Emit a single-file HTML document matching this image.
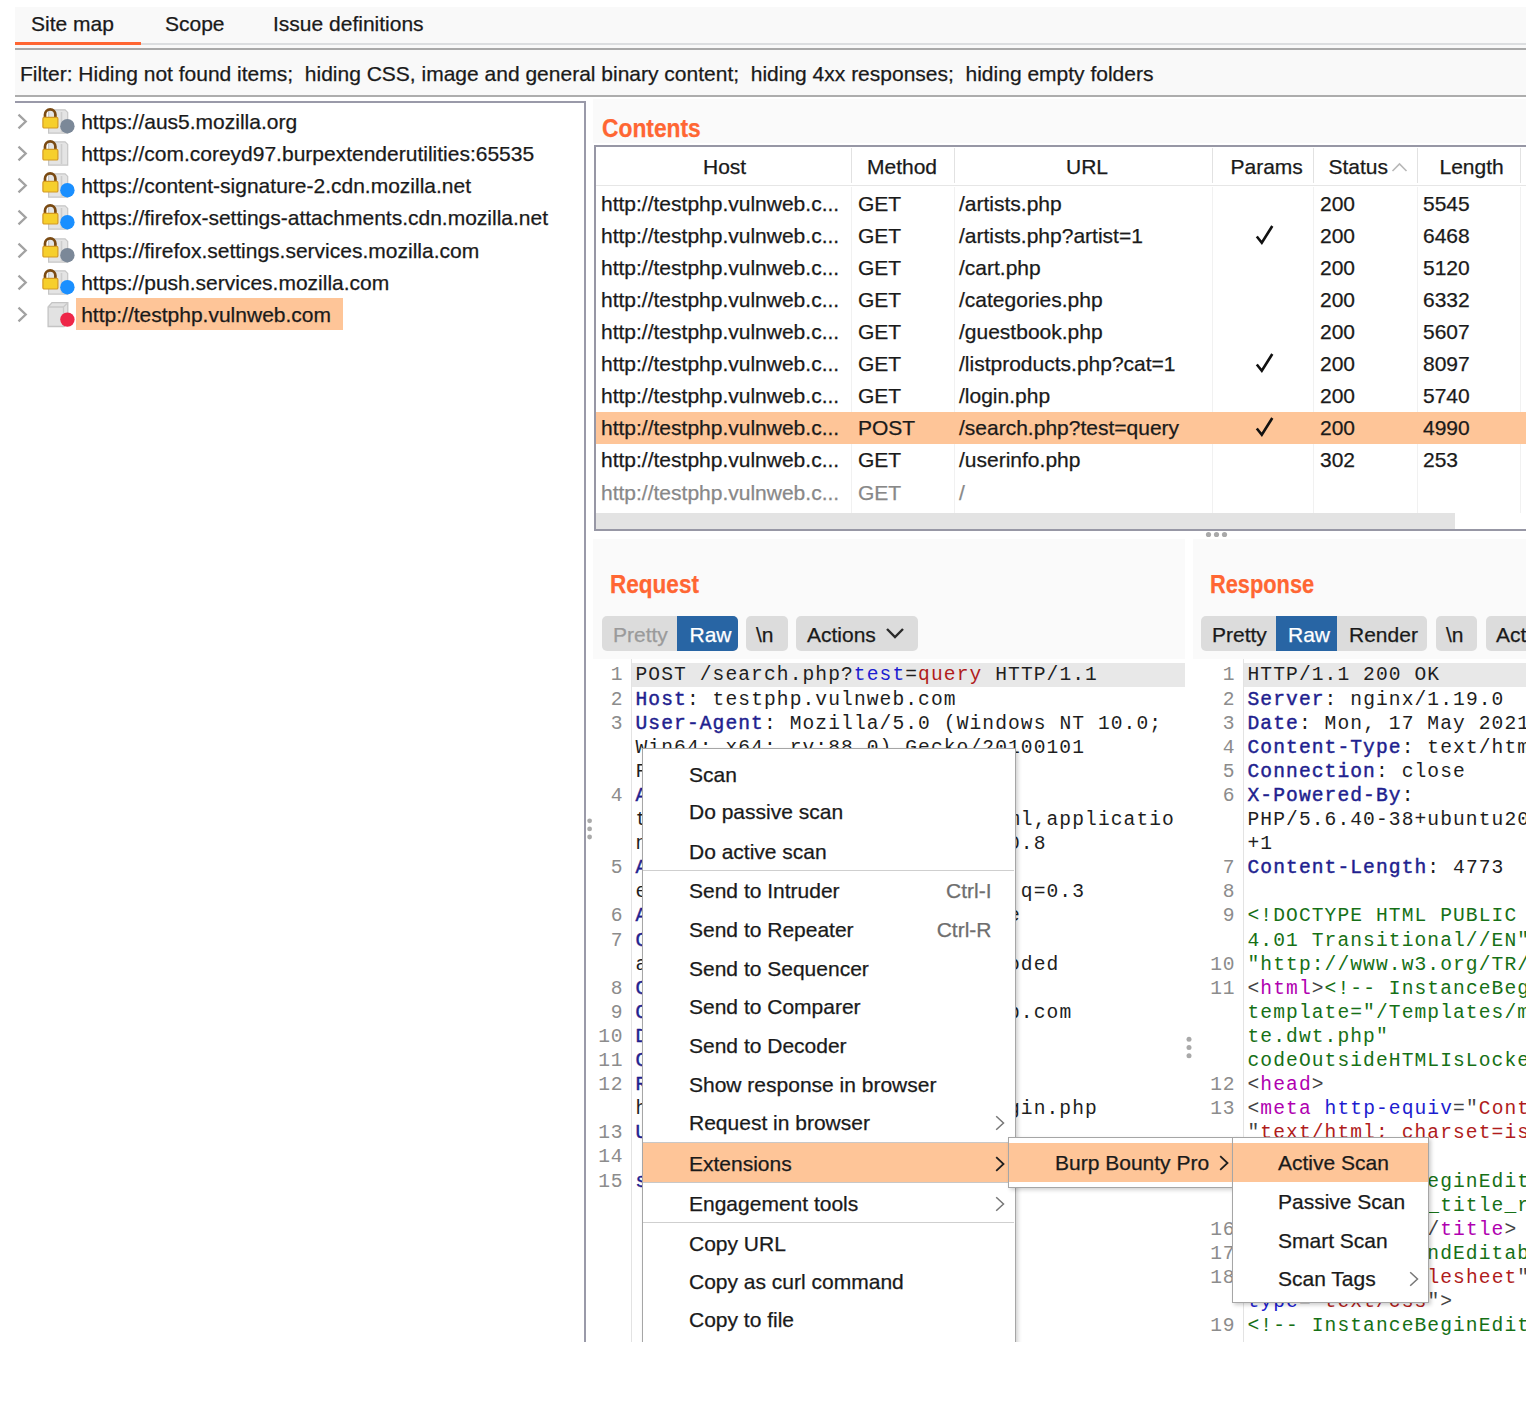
<!DOCTYPE html>
<html><head><meta charset="utf-8"><title>Burp Suite - Target</title>
<style>
html,body{margin:0;padding:0;background:#fff;}
body{width:1536px;height:1421px;position:relative;overflow:hidden;font-family:'Liberation Sans', sans-serif;}
div,svg{position:absolute;}
div div, div svg{position:absolute;}
.t{white-space:pre;line-height:24px;-webkit-text-stroke:0.25px currentColor;}
.m{white-space:pre;line-height:24px;font-family:'Liberation Mono', monospace;font-size:19.6px;letter-spacing:1.086px;color:#1e1e1e;}
</style></head><body>
<div style="left:15px;top:7px;width:1511px;height:41px;background:#f9f9f9;"></div>
<div class="t" style="left:31px;top:11.5px;font-size:21px;color:#1a1a1a;font-weight:normal;font-family:'Liberation Sans', sans-serif;">Site map</div>
<div class="t" style="left:165px;top:11.5px;font-size:21px;color:#1a1a1a;font-weight:normal;font-family:'Liberation Sans', sans-serif;">Scope</div>
<div class="t" style="left:273px;top:11.5px;font-size:21px;color:#1a1a1a;font-weight:normal;font-family:'Liberation Sans', sans-serif;">Issue definitions</div>
<div style="left:141px;top:43px;width:1385px;height:2px;background:#dcdee0;"></div>
<div style="left:15px;top:42px;width:126px;height:3px;background:#ff6633;"></div>
<div style="left:15px;top:48px;width:1511px;height:2px;background:#a9a9a9;"></div>
<div style="left:15px;top:50px;width:1511px;height:45px;background:#f9f9f9;"></div>
<div class="t" style="left:20px;top:61.5px;font-size:21px;color:#1a1a1a;font-weight:normal;font-family:'Liberation Sans', sans-serif;">Filter: Hiding not found items;  hiding CSS, image and general binary content;  hiding 4xx responses;  hiding empty folders</div>
<div style="left:15px;top:95px;width:1511px;height:2px;background:#adadad;"></div>
<div style="left:15px;top:101px;width:571px;height:2px;background:#9a9aa9;"></div>
<div style="left:584px;top:101px;width:2px;height:1241px;background:#9a9aa9;"></div>
<svg style="left:16.3px;top:113.0px" width="12" height="17" viewBox="0 0 12 17"><path d="M2.5 1.7 L9.7 8.5 L2.5 15.3" fill="none" stroke="#a2a2a2" stroke-width="2.3"/></svg>
<svg style="left:40px;top:106.0px" width="36" height="30" viewBox="0 0 36 30"><path d="M8.6 3.8 h16.5 l2.6 2.6 v20.7 h-19.1 z" fill="#e4e4e4" stroke="#c6c6c6" stroke-width="1.2"/><path d="M21.5 6 v20" stroke="#cdcdcd" stroke-width="1.6"/><path d="M5 12 V8.6 A5.2 5.2 0 0 1 15.4 8.6 V12" fill="none" stroke="#7a4a12" stroke-width="2.7"/><rect x="2.9" y="11.4" width="15" height="10.6" rx="1.3" fill="#f6cf2c" stroke="#d49a22" stroke-width="1.2"/><circle cx="27.4" cy="20.2" r="7.2" fill="#7b8898"/></svg>
<div class="t" style="left:81.2px;top:110.0px;font-size:21px;color:#1a1a1a;font-weight:normal;font-family:'Liberation Sans', sans-serif;">https://aus5.mozilla.org</div>
<svg style="left:16.3px;top:145.15px" width="12" height="17" viewBox="0 0 12 17"><path d="M2.5 1.7 L9.7 8.5 L2.5 15.3" fill="none" stroke="#a2a2a2" stroke-width="2.3"/></svg>
<svg style="left:40px;top:138.15px" width="36" height="30" viewBox="0 0 36 30"><path d="M8.6 3.8 h16.5 l2.6 2.6 v20.7 h-19.1 z" fill="#e4e4e4" stroke="#c6c6c6" stroke-width="1.2"/><path d="M21.5 6 v20" stroke="#cdcdcd" stroke-width="1.6"/><path d="M5 12 V8.6 A5.2 5.2 0 0 1 15.4 8.6 V12" fill="none" stroke="#7a4a12" stroke-width="2.7"/><rect x="2.9" y="11.4" width="15" height="10.6" rx="1.3" fill="#f6cf2c" stroke="#d49a22" stroke-width="1.2"/></svg>
<div class="t" style="left:81.2px;top:142.15px;font-size:21px;color:#1a1a1a;font-weight:normal;font-family:'Liberation Sans', sans-serif;">https://com.coreyd97.burpextenderutilities:65535</div>
<svg style="left:16.3px;top:177.3px" width="12" height="17" viewBox="0 0 12 17"><path d="M2.5 1.7 L9.7 8.5 L2.5 15.3" fill="none" stroke="#a2a2a2" stroke-width="2.3"/></svg>
<svg style="left:40px;top:170.3px" width="36" height="30" viewBox="0 0 36 30"><path d="M8.6 3.8 h16.5 l2.6 2.6 v20.7 h-19.1 z" fill="#e4e4e4" stroke="#c6c6c6" stroke-width="1.2"/><path d="M21.5 6 v20" stroke="#cdcdcd" stroke-width="1.6"/><path d="M5 12 V8.6 A5.2 5.2 0 0 1 15.4 8.6 V12" fill="none" stroke="#7a4a12" stroke-width="2.7"/><rect x="2.9" y="11.4" width="15" height="10.6" rx="1.3" fill="#f6cf2c" stroke="#d49a22" stroke-width="1.2"/><circle cx="27.4" cy="20.2" r="7.2" fill="#1a8fff"/></svg>
<div class="t" style="left:81.2px;top:174.3px;font-size:21px;color:#1a1a1a;font-weight:normal;font-family:'Liberation Sans', sans-serif;">https://content-signature-2.cdn.mozilla.net</div>
<svg style="left:16.3px;top:209.45px" width="12" height="17" viewBox="0 0 12 17"><path d="M2.5 1.7 L9.7 8.5 L2.5 15.3" fill="none" stroke="#a2a2a2" stroke-width="2.3"/></svg>
<svg style="left:40px;top:202.45px" width="36" height="30" viewBox="0 0 36 30"><path d="M8.6 3.8 h16.5 l2.6 2.6 v20.7 h-19.1 z" fill="#e4e4e4" stroke="#c6c6c6" stroke-width="1.2"/><path d="M21.5 6 v20" stroke="#cdcdcd" stroke-width="1.6"/><path d="M5 12 V8.6 A5.2 5.2 0 0 1 15.4 8.6 V12" fill="none" stroke="#7a4a12" stroke-width="2.7"/><rect x="2.9" y="11.4" width="15" height="10.6" rx="1.3" fill="#f6cf2c" stroke="#d49a22" stroke-width="1.2"/><circle cx="27.4" cy="20.2" r="7.2" fill="#1a8fff"/></svg>
<div class="t" style="left:81.2px;top:206.45px;font-size:21px;color:#1a1a1a;font-weight:normal;font-family:'Liberation Sans', sans-serif;">https://firefox-settings-attachments.cdn.mozilla.net</div>
<svg style="left:16.3px;top:241.60000000000002px" width="12" height="17" viewBox="0 0 12 17"><path d="M2.5 1.7 L9.7 8.5 L2.5 15.3" fill="none" stroke="#a2a2a2" stroke-width="2.3"/></svg>
<svg style="left:40px;top:234.60000000000002px" width="36" height="30" viewBox="0 0 36 30"><path d="M8.6 3.8 h16.5 l2.6 2.6 v20.7 h-19.1 z" fill="#e4e4e4" stroke="#c6c6c6" stroke-width="1.2"/><path d="M21.5 6 v20" stroke="#cdcdcd" stroke-width="1.6"/><path d="M5 12 V8.6 A5.2 5.2 0 0 1 15.4 8.6 V12" fill="none" stroke="#7a4a12" stroke-width="2.7"/><rect x="2.9" y="11.4" width="15" height="10.6" rx="1.3" fill="#f6cf2c" stroke="#d49a22" stroke-width="1.2"/><circle cx="27.4" cy="20.2" r="7.2" fill="#7b8898"/></svg>
<div class="t" style="left:81.2px;top:238.60000000000002px;font-size:21px;color:#1a1a1a;font-weight:normal;font-family:'Liberation Sans', sans-serif;">https://firefox.settings.services.mozilla.com</div>
<svg style="left:16.3px;top:273.75px" width="12" height="17" viewBox="0 0 12 17"><path d="M2.5 1.7 L9.7 8.5 L2.5 15.3" fill="none" stroke="#a2a2a2" stroke-width="2.3"/></svg>
<svg style="left:40px;top:266.75px" width="36" height="30" viewBox="0 0 36 30"><path d="M8.6 3.8 h16.5 l2.6 2.6 v20.7 h-19.1 z" fill="#e4e4e4" stroke="#c6c6c6" stroke-width="1.2"/><path d="M21.5 6 v20" stroke="#cdcdcd" stroke-width="1.6"/><path d="M5 12 V8.6 A5.2 5.2 0 0 1 15.4 8.6 V12" fill="none" stroke="#7a4a12" stroke-width="2.7"/><rect x="2.9" y="11.4" width="15" height="10.6" rx="1.3" fill="#f6cf2c" stroke="#d49a22" stroke-width="1.2"/><circle cx="27.4" cy="20.2" r="7.2" fill="#1a8fff"/></svg>
<div class="t" style="left:81.2px;top:270.75px;font-size:21px;color:#1a1a1a;font-weight:normal;font-family:'Liberation Sans', sans-serif;">https://push.services.mozilla.com</div>
<div style="left:76px;top:298px;width:267px;height:32px;background:#fec598;"></div>
<svg style="left:16.3px;top:305.9px" width="12" height="17" viewBox="0 0 12 17"><path d="M2.5 1.7 L9.7 8.5 L2.5 15.3" fill="none" stroke="#a2a2a2" stroke-width="2.3"/></svg>
<svg style="left:40px;top:298.9px" width="36" height="30" viewBox="0 0 36 30"><path d="M8.1 8 L12 3.6 H27.8 V24 L24 27.5 H8.1 Z" fill="#e2e2e2" stroke="#c4c4c4" stroke-width="1.3"/><path d="M8.1 8 H23.5 L27.8 3.6 M23.5 8 V27.5" fill="none" stroke="#c9c9c9" stroke-width="1.3"/><circle cx="27.4" cy="20.6" r="7.2" fill="#ee2648"/></svg>
<div class="t" style="left:81.2px;top:302.9px;font-size:21px;color:#1a1a1a;font-weight:normal;font-family:'Liberation Sans', sans-serif;">http://testphp.vulnweb.com</div>
<div style="left:593px;top:99px;width:933px;height:44px;background:#fafafa;"></div>
<div class="t" style="left:601.5px;top:116px;font-size:25.2px;color:#ff6633;font-weight:bold;font-family:'Liberation Sans', sans-serif;transform:scaleX(0.905);transform-origin:0 0;">Contents</div>
<div style="left:594px;top:145px;width:932px;height:386px;background:#ffffff;"></div>
<div style="left:594px;top:145px;width:932px;height:2px;background:#9797a5;"></div>
<div style="left:594px;top:145px;width:2px;height:386px;background:#9797a5;"></div>
<div style="left:594px;top:529px;width:932px;height:2px;background:#9797a5;"></div>
<div style="left:596px;top:185px;width:930px;height:1px;background:#e6e6e6;"></div>
<div style="left:851px;top:148px;width:1px;height:35px;background:#e2e2e2;"></div>
<div style="left:851px;top:187px;width:1px;height:326px;background:#f1f1f1;"></div>
<div style="left:954px;top:148px;width:1px;height:35px;background:#e2e2e2;"></div>
<div style="left:954px;top:187px;width:1px;height:326px;background:#f1f1f1;"></div>
<div style="left:1212px;top:148px;width:1px;height:35px;background:#e2e2e2;"></div>
<div style="left:1212px;top:187px;width:1px;height:326px;background:#f1f1f1;"></div>
<div style="left:1313px;top:148px;width:1px;height:35px;background:#e2e2e2;"></div>
<div style="left:1313px;top:187px;width:1px;height:326px;background:#f1f1f1;"></div>
<div style="left:1417px;top:148px;width:1px;height:35px;background:#e2e2e2;"></div>
<div style="left:1417px;top:187px;width:1px;height:326px;background:#f1f1f1;"></div>
<div style="left:1520px;top:148px;width:1px;height:35px;background:#e2e2e2;"></div>
<div style="left:1520px;top:187px;width:1px;height:326px;background:#f1f1f1;"></div>
<div class="t" style="left:703px;top:155px;font-size:21px;color:#1a1a1a;font-weight:normal;font-family:'Liberation Sans', sans-serif;">Host</div>
<div class="t" style="left:867px;top:155px;font-size:21px;color:#1a1a1a;font-weight:normal;font-family:'Liberation Sans', sans-serif;">Method</div>
<div class="t" style="left:1066px;top:155px;font-size:21px;color:#1a1a1a;font-weight:normal;font-family:'Liberation Sans', sans-serif;">URL</div>
<div class="t" style="left:1230.5px;top:155px;font-size:21px;color:#1a1a1a;font-weight:normal;font-family:'Liberation Sans', sans-serif;">Params</div>
<div class="t" style="left:1328.5px;top:155px;font-size:21px;color:#1a1a1a;font-weight:normal;font-family:'Liberation Sans', sans-serif;">Status</div>
<svg style="left:1391px;top:161px" width="17" height="12" viewBox="0 0 17 12"><path d="M1.5 10 L8.5 3 L15.5 10" fill="none" stroke="#b8b8b8" stroke-width="1.6"/></svg>
<div class="t" style="left:1439.5px;top:155px;font-size:21px;color:#1a1a1a;font-weight:normal;font-family:'Liberation Sans', sans-serif;">Length</div>
<div class="t" style="left:601px;top:191.6px;font-size:21px;color:#1a1a1a;font-weight:normal;font-family:'Liberation Sans', sans-serif;">http://testphp.vulnweb.c...</div>
<div class="t" style="left:858px;top:191.6px;font-size:21px;color:#1a1a1a;font-weight:normal;font-family:'Liberation Sans', sans-serif;">GET</div>
<div class="t" style="left:959px;top:191.6px;font-size:21px;color:#1a1a1a;font-weight:normal;font-family:'Liberation Sans', sans-serif;">/artists.php</div>
<div class="t" style="left:1320px;top:191.6px;font-size:21px;color:#1a1a1a;font-weight:normal;font-family:'Liberation Sans', sans-serif;">200</div>
<div class="t" style="left:1423px;top:191.6px;font-size:21px;color:#1a1a1a;font-weight:normal;font-family:'Liberation Sans', sans-serif;">5545</div>
<div class="t" style="left:601px;top:223.7px;font-size:21px;color:#1a1a1a;font-weight:normal;font-family:'Liberation Sans', sans-serif;">http://testphp.vulnweb.c...</div>
<div class="t" style="left:858px;top:223.7px;font-size:21px;color:#1a1a1a;font-weight:normal;font-family:'Liberation Sans', sans-serif;">GET</div>
<div class="t" style="left:959px;top:223.7px;font-size:21px;color:#1a1a1a;font-weight:normal;font-family:'Liberation Sans', sans-serif;">/artists.php?artist=1</div>
<svg style="left:1254px;top:223.7px" width="22" height="22" viewBox="0 0 22 22"><path d="M2.8 12.5 L7.8 18.8 L18.3 2" fill="none" stroke="#111" stroke-width="2.6"/></svg>
<div class="t" style="left:1320px;top:223.7px;font-size:21px;color:#1a1a1a;font-weight:normal;font-family:'Liberation Sans', sans-serif;">200</div>
<div class="t" style="left:1423px;top:223.7px;font-size:21px;color:#1a1a1a;font-weight:normal;font-family:'Liberation Sans', sans-serif;">6468</div>
<div class="t" style="left:601px;top:255.8px;font-size:21px;color:#1a1a1a;font-weight:normal;font-family:'Liberation Sans', sans-serif;">http://testphp.vulnweb.c...</div>
<div class="t" style="left:858px;top:255.8px;font-size:21px;color:#1a1a1a;font-weight:normal;font-family:'Liberation Sans', sans-serif;">GET</div>
<div class="t" style="left:959px;top:255.8px;font-size:21px;color:#1a1a1a;font-weight:normal;font-family:'Liberation Sans', sans-serif;">/cart.php</div>
<div class="t" style="left:1320px;top:255.8px;font-size:21px;color:#1a1a1a;font-weight:normal;font-family:'Liberation Sans', sans-serif;">200</div>
<div class="t" style="left:1423px;top:255.8px;font-size:21px;color:#1a1a1a;font-weight:normal;font-family:'Liberation Sans', sans-serif;">5120</div>
<div class="t" style="left:601px;top:287.9px;font-size:21px;color:#1a1a1a;font-weight:normal;font-family:'Liberation Sans', sans-serif;">http://testphp.vulnweb.c...</div>
<div class="t" style="left:858px;top:287.9px;font-size:21px;color:#1a1a1a;font-weight:normal;font-family:'Liberation Sans', sans-serif;">GET</div>
<div class="t" style="left:959px;top:287.9px;font-size:21px;color:#1a1a1a;font-weight:normal;font-family:'Liberation Sans', sans-serif;">/categories.php</div>
<div class="t" style="left:1320px;top:287.9px;font-size:21px;color:#1a1a1a;font-weight:normal;font-family:'Liberation Sans', sans-serif;">200</div>
<div class="t" style="left:1423px;top:287.9px;font-size:21px;color:#1a1a1a;font-weight:normal;font-family:'Liberation Sans', sans-serif;">6332</div>
<div class="t" style="left:601px;top:320.0px;font-size:21px;color:#1a1a1a;font-weight:normal;font-family:'Liberation Sans', sans-serif;">http://testphp.vulnweb.c...</div>
<div class="t" style="left:858px;top:320.0px;font-size:21px;color:#1a1a1a;font-weight:normal;font-family:'Liberation Sans', sans-serif;">GET</div>
<div class="t" style="left:959px;top:320.0px;font-size:21px;color:#1a1a1a;font-weight:normal;font-family:'Liberation Sans', sans-serif;">/guestbook.php</div>
<div class="t" style="left:1320px;top:320.0px;font-size:21px;color:#1a1a1a;font-weight:normal;font-family:'Liberation Sans', sans-serif;">200</div>
<div class="t" style="left:1423px;top:320.0px;font-size:21px;color:#1a1a1a;font-weight:normal;font-family:'Liberation Sans', sans-serif;">5607</div>
<div class="t" style="left:601px;top:352.1px;font-size:21px;color:#1a1a1a;font-weight:normal;font-family:'Liberation Sans', sans-serif;">http://testphp.vulnweb.c...</div>
<div class="t" style="left:858px;top:352.1px;font-size:21px;color:#1a1a1a;font-weight:normal;font-family:'Liberation Sans', sans-serif;">GET</div>
<div class="t" style="left:959px;top:352.1px;font-size:21px;color:#1a1a1a;font-weight:normal;font-family:'Liberation Sans', sans-serif;">/listproducts.php?cat=1</div>
<svg style="left:1254px;top:352.1px" width="22" height="22" viewBox="0 0 22 22"><path d="M2.8 12.5 L7.8 18.8 L18.3 2" fill="none" stroke="#111" stroke-width="2.6"/></svg>
<div class="t" style="left:1320px;top:352.1px;font-size:21px;color:#1a1a1a;font-weight:normal;font-family:'Liberation Sans', sans-serif;">200</div>
<div class="t" style="left:1423px;top:352.1px;font-size:21px;color:#1a1a1a;font-weight:normal;font-family:'Liberation Sans', sans-serif;">8097</div>
<div class="t" style="left:601px;top:384.20000000000005px;font-size:21px;color:#1a1a1a;font-weight:normal;font-family:'Liberation Sans', sans-serif;">http://testphp.vulnweb.c...</div>
<div class="t" style="left:858px;top:384.20000000000005px;font-size:21px;color:#1a1a1a;font-weight:normal;font-family:'Liberation Sans', sans-serif;">GET</div>
<div class="t" style="left:959px;top:384.20000000000005px;font-size:21px;color:#1a1a1a;font-weight:normal;font-family:'Liberation Sans', sans-serif;">/login.php</div>
<div class="t" style="left:1320px;top:384.20000000000005px;font-size:21px;color:#1a1a1a;font-weight:normal;font-family:'Liberation Sans', sans-serif;">200</div>
<div class="t" style="left:1423px;top:384.20000000000005px;font-size:21px;color:#1a1a1a;font-weight:normal;font-family:'Liberation Sans', sans-serif;">5740</div>
<div style="left:596px;top:412px;width:930px;height:32px;background:#fec598;"></div>
<div class="t" style="left:601px;top:416.3px;font-size:21px;color:#1a1a1a;font-weight:normal;font-family:'Liberation Sans', sans-serif;">http://testphp.vulnweb.c...</div>
<div class="t" style="left:858px;top:416.3px;font-size:21px;color:#1a1a1a;font-weight:normal;font-family:'Liberation Sans', sans-serif;">POST</div>
<div class="t" style="left:959px;top:416.3px;font-size:21px;color:#1a1a1a;font-weight:normal;font-family:'Liberation Sans', sans-serif;">/search.php?test=query</div>
<svg style="left:1254px;top:416.3px" width="22" height="22" viewBox="0 0 22 22"><path d="M2.8 12.5 L7.8 18.8 L18.3 2" fill="none" stroke="#111" stroke-width="2.6"/></svg>
<div class="t" style="left:1320px;top:416.3px;font-size:21px;color:#1a1a1a;font-weight:normal;font-family:'Liberation Sans', sans-serif;">200</div>
<div class="t" style="left:1423px;top:416.3px;font-size:21px;color:#1a1a1a;font-weight:normal;font-family:'Liberation Sans', sans-serif;">4990</div>
<div class="t" style="left:601px;top:448.4px;font-size:21px;color:#1a1a1a;font-weight:normal;font-family:'Liberation Sans', sans-serif;">http://testphp.vulnweb.c...</div>
<div class="t" style="left:858px;top:448.4px;font-size:21px;color:#1a1a1a;font-weight:normal;font-family:'Liberation Sans', sans-serif;">GET</div>
<div class="t" style="left:959px;top:448.4px;font-size:21px;color:#1a1a1a;font-weight:normal;font-family:'Liberation Sans', sans-serif;">/userinfo.php</div>
<div class="t" style="left:1320px;top:448.4px;font-size:21px;color:#1a1a1a;font-weight:normal;font-family:'Liberation Sans', sans-serif;">302</div>
<div class="t" style="left:1423px;top:448.4px;font-size:21px;color:#1a1a1a;font-weight:normal;font-family:'Liberation Sans', sans-serif;">253</div>
<div class="t" style="left:601px;top:480.5px;font-size:21px;color:#888888;font-weight:normal;font-family:'Liberation Sans', sans-serif;">http://testphp.vulnweb.c...</div>
<div class="t" style="left:858px;top:480.5px;font-size:21px;color:#888888;font-weight:normal;font-family:'Liberation Sans', sans-serif;">GET</div>
<div class="t" style="left:959px;top:480.5px;font-size:21px;color:#888888;font-weight:normal;font-family:'Liberation Sans', sans-serif;">/</div>
<div class="t" style="left:1320px;top:480.5px;font-size:21px;color:#888888;font-weight:normal;font-family:'Liberation Sans', sans-serif;"></div>
<div class="t" style="left:1423px;top:480.5px;font-size:21px;color:#888888;font-weight:normal;font-family:'Liberation Sans', sans-serif;"></div>
<div style="left:596px;top:513px;width:930px;height:16px;background:#ffffff;"></div>
<div style="left:596px;top:513px;width:859px;height:16px;background:#e3e3e3;"></div>
<svg style="left:1204px;top:530px" width="26" height="9" viewBox="0 0 26 9"><circle cx="4.5" cy="4.5" r="2.6" fill="#a9a9a9"/><circle cx="12.5" cy="4.5" r="2.6" fill="#a9a9a9"/><circle cx="20.5" cy="4.5" r="2.6" fill="#a9a9a9"/></svg>
<div style="left:593px;top:539px;width:592px;height:120px;background:#fafafa;"></div>
<div class="t" style="left:610px;top:571.5px;font-size:25.2px;color:#ff6633;font-weight:bold;font-family:'Liberation Sans', sans-serif;transform:scaleX(0.895);transform-origin:0 0;">Request</div>
<div style="left:602px;top:616px;width:136px;height:35px;background:#dcdcdc;border-radius:5px;"></div>
<div style="left:677px;top:616px;width:61px;height:35px;background:#2865a4;border-radius:0 5px 5px 0"></div>
<div class="t" style="left:613px;top:622.5px;font-size:21px;color:#9a9a9a;font-weight:normal;font-family:'Liberation Sans', sans-serif;">Pretty</div>
<div class="t" style="left:689.5px;top:622.5px;font-size:21px;color:#ffffff;font-weight:normal;font-family:'Liberation Sans', sans-serif;">Raw</div>
<div style="left:746px;top:616px;width:42px;height:35px;background:#dcdcdc;border-radius:5px;"></div>
<div class="t" style="left:756px;top:622.5px;font-size:21px;color:#1a1a1a;font-weight:normal;font-family:'Liberation Sans', sans-serif;">\n</div>
<div style="left:796px;top:616px;width:122px;height:35px;background:#dcdcdc;border-radius:5px;"></div>
<div class="t" style="left:807px;top:622.5px;font-size:21px;color:#1a1a1a;font-weight:normal;font-family:'Liberation Sans', sans-serif;">Actions</div>
<svg style="left:884px;top:625px" width="22" height="16" viewBox="0 0 22 16"><path d="M3 4 L11 12 L19 4" fill="none" stroke="#2a2a2a" stroke-width="2.4"/></svg>
<div style="left:1193px;top:539px;width:333px;height:120px;background:#fafafa;"></div>
<div class="t" style="left:1210px;top:571.5px;font-size:25.2px;color:#ff6633;font-weight:bold;font-family:'Liberation Sans', sans-serif;transform:scaleX(0.865);transform-origin:0 0;">Response</div>
<div style="left:1201px;top:616px;width:226px;height:35px;background:#dcdcdc;border-radius:5px"></div>
<div style="left:1276px;top:616px;width:61px;height:35px;background:#2865a4;"></div>
<div class="t" style="left:1212px;top:622.5px;font-size:21px;color:#1a1a1a;font-weight:normal;font-family:'Liberation Sans', sans-serif;">Pretty</div>
<div class="t" style="left:1288px;top:622.5px;font-size:21px;color:#ffffff;font-weight:normal;font-family:'Liberation Sans', sans-serif;">Raw</div>
<div class="t" style="left:1349px;top:622.5px;font-size:21px;color:#1a1a1a;font-weight:normal;font-family:'Liberation Sans', sans-serif;">Render</div>
<div style="left:1436px;top:616px;width:41px;height:35px;background:#dcdcdc;border-radius:5px;"></div>
<div class="t" style="left:1446px;top:622.5px;font-size:21px;color:#1a1a1a;font-weight:normal;font-family:'Liberation Sans', sans-serif;">\n</div>
<div style="left:1486px;top:616px;width:60px;height:35px;background:#dcdcdc;border-radius:5px"></div>
<div style="left:1486px;top:616px;width:40px;height:35px;overflow:hidden">
<div class="t" style="left:10px;top:6.5px;font-size:21px;color:#1a1a1a;font-family:'Liberation Sans', sans-serif">Actions</div>
</div>
<div style="left:631px;top:659px;width:1px;height:683px;background:#e3e3e3;"></div>
<div style="left:632px;top:663px;width:553px;height:24px;background:#e8e8e8;"></div>
<div class="m" style="left:635.5px;top:663.4px"><span style="color:#1e1e1e;">POST /search.php?</span><span style="color:#1c1cd0;">test</span><span style="color:#1e1e1e;">=</span><span style="color:#b01c1c;">query</span><span style="color:#1e1e1e;"> HTTP/1.1</span></div>
<div class="m" style="left:635.5px;top:687.5px"><span style="color:#1f1f8f;-webkit-text-stroke:0.45px #1f1f8f;">Host</span><span style="color:#1e1e1e;">: </span><span style="color:#1e1e1e;">testphp.vulnweb.com</span></div>
<div class="m" style="left:635.5px;top:711.6px"><span style="color:#1f1f8f;-webkit-text-stroke:0.45px #1f1f8f;">User-Agent</span><span style="color:#1e1e1e;">: </span><span style="color:#1e1e1e;">Mozilla/5.0 (Windows NT 10.0; </span></div>
<div class="m" style="left:635.5px;top:735.7px"><span style="color:#1e1e1e;">Win64; x64; rv:88.0) Gecko/20100101 </span></div>
<div class="m" style="left:635.5px;top:759.8px"><span style="color:#1e1e1e;">Firefox/88.0</span></div>
<div class="m" style="left:635.5px;top:783.9px"><span style="color:#1f1f8f;-webkit-text-stroke:0.45px #1f1f8f;">Accept</span><span style="color:#1e1e1e;">: </span><span style="color:#1e1e1e;"></span></div>
<div class="m" style="left:635.5px;top:808.0px"><span style="color:#1e1e1e;">text/html,application/xhtml+xml,applicatio</span></div>
<div class="m" style="left:635.5px;top:832.1px"><span style="color:#1e1e1e;">n/xml;q=0.9,image/webp,*/*;q=0.8</span></div>
<div class="m" style="left:635.5px;top:856.2px"><span style="color:#1f1f8f;-webkit-text-stroke:0.45px #1f1f8f;">Accept-Language</span><span style="color:#1e1e1e;">: </span><span style="color:#1e1e1e;"></span></div>
<div class="m" style="left:635.5px;top:880.3px"><span style="color:#1e1e1e;">es-ES,es;q=0.8,en-US;q=0.5,en;q=0.3</span></div>
<div class="m" style="left:635.5px;top:904.4px"><span style="color:#1f1f8f;-webkit-text-stroke:0.45px #1f1f8f;">Accept-Encoding</span><span style="color:#1e1e1e;">: </span><span style="color:#1e1e1e;">gzip, deflate</span></div>
<div class="m" style="left:635.5px;top:928.5px"><span style="color:#1f1f8f;-webkit-text-stroke:0.45px #1f1f8f;">Content-Type</span><span style="color:#1e1e1e;">: </span><span style="color:#1e1e1e;"></span></div>
<div class="m" style="left:635.5px;top:952.6px"><span style="color:#1e1e1e;">application/x-www-form-urlencoded</span></div>
<div class="m" style="left:635.5px;top:976.7px"><span style="color:#1f1f8f;-webkit-text-stroke:0.45px #1f1f8f;">Content-Length</span><span style="color:#1e1e1e;">: </span><span style="color:#1e1e1e;">26</span></div>
<div class="m" style="left:635.5px;top:1000.8px"><span style="color:#1f1f8f;-webkit-text-stroke:0.45px #1f1f8f;">Origin</span><span style="color:#1e1e1e;">: </span><span style="color:#1e1e1e;">http://testphp.vulnweb.com</span></div>
<div class="m" style="left:635.5px;top:1024.9px"><span style="color:#1f1f8f;-webkit-text-stroke:0.45px #1f1f8f;">DNT</span><span style="color:#1e1e1e;">: </span><span style="color:#1e1e1e;">1</span></div>
<div class="m" style="left:635.5px;top:1049.0px"><span style="color:#1f1f8f;-webkit-text-stroke:0.45px #1f1f8f;">Connection</span><span style="color:#1e1e1e;">: </span><span style="color:#1e1e1e;">close</span></div>
<div class="m" style="left:635.5px;top:1073.1px"><span style="color:#1f1f8f;-webkit-text-stroke:0.45px #1f1f8f;">Referer</span><span style="color:#1e1e1e;">: </span><span style="color:#1e1e1e;"></span></div>
<div class="m" style="left:635.5px;top:1097.2px"><span style="color:#1e1e1e;">http://testphp.vulnweb.com/login.php</span></div>
<div class="m" style="left:635.5px;top:1121.3px"><span style="color:#1f1f8f;-webkit-text-stroke:0.45px #1f1f8f;">Upgrade-Insecure-Requests</span><span style="color:#1e1e1e;">: </span><span style="color:#1e1e1e;">1</span></div>
<div class="m" style="left:635.5px;top:1169.5px"><span style="color:#1f1f8f;-webkit-text-stroke:0.45px #1f1f8f;">searchFor</span><span style="color:#1e1e1e;">=</span><span style="color:#b01c1c;">test</span><span style="color:#1e1e1e;">&amp;</span><span style="color:#1c1cd0;">goButton</span><span style="color:#1e1e1e;">=</span><span style="color:#b01c1c;">go</span></div>
<div class="m" style="left:563px;width:60px;text-align:right;top:663.4px;color:#8c8c8c;letter-spacing:0.6px">1</div>
<div class="m" style="left:563px;width:60px;text-align:right;top:687.5px;color:#8c8c8c;letter-spacing:0.6px">2</div>
<div class="m" style="left:563px;width:60px;text-align:right;top:711.6px;color:#8c8c8c;letter-spacing:0.6px">3</div>
<div class="m" style="left:563px;width:60px;text-align:right;top:783.9px;color:#8c8c8c;letter-spacing:0.6px">4</div>
<div class="m" style="left:563px;width:60px;text-align:right;top:856.2px;color:#8c8c8c;letter-spacing:0.6px">5</div>
<div class="m" style="left:563px;width:60px;text-align:right;top:904.4px;color:#8c8c8c;letter-spacing:0.6px">6</div>
<div class="m" style="left:563px;width:60px;text-align:right;top:928.5px;color:#8c8c8c;letter-spacing:0.6px">7</div>
<div class="m" style="left:563px;width:60px;text-align:right;top:976.7px;color:#8c8c8c;letter-spacing:0.6px">8</div>
<div class="m" style="left:563px;width:60px;text-align:right;top:1000.8px;color:#8c8c8c;letter-spacing:0.6px">9</div>
<div class="m" style="left:563px;width:60px;text-align:right;top:1024.9px;color:#8c8c8c;letter-spacing:0.6px">10</div>
<div class="m" style="left:563px;width:60px;text-align:right;top:1049.0px;color:#8c8c8c;letter-spacing:0.6px">11</div>
<div class="m" style="left:563px;width:60px;text-align:right;top:1073.1px;color:#8c8c8c;letter-spacing:0.6px">12</div>
<div class="m" style="left:563px;width:60px;text-align:right;top:1121.3px;color:#8c8c8c;letter-spacing:0.6px">13</div>
<div class="m" style="left:563px;width:60px;text-align:right;top:1145.4px;color:#8c8c8c;letter-spacing:0.6px">14</div>
<div class="m" style="left:563px;width:60px;text-align:right;top:1169.5px;color:#8c8c8c;letter-spacing:0.6px">15</div>
<div style="left:0;top:0;width:1526px;height:1342px;overflow:hidden">
<div style="left:1243px;top:659px;width:1px;height:683px;background:#e3e3e3;"></div>
<div style="left:1244px;top:663px;width:282px;height:24px;background:#e8e8e8;"></div>
<div class="m" style="left:1247.5px;top:663.4px"><span style="color:#1e1e1e;">HTTP/1.1 200 OK</span></div>
<div class="m" style="left:1247.5px;top:687.5px"><span style="color:#1f1f8f;-webkit-text-stroke:0.45px #1f1f8f;">Server</span><span style="color:#1e1e1e;">: </span><span style="color:#1e1e1e;">nginx/1.19.0</span></div>
<div class="m" style="left:1247.5px;top:711.6px"><span style="color:#1f1f8f;-webkit-text-stroke:0.45px #1f1f8f;">Date</span><span style="color:#1e1e1e;">: </span><span style="color:#1e1e1e;">Mon, 17 May 2021 10:12:43 GMT</span></div>
<div class="m" style="left:1247.5px;top:735.7px"><span style="color:#1f1f8f;-webkit-text-stroke:0.45px #1f1f8f;">Content-Type</span><span style="color:#1e1e1e;">: </span><span style="color:#1e1e1e;">text/html; charset=UTF-8</span></div>
<div class="m" style="left:1247.5px;top:759.8px"><span style="color:#1f1f8f;-webkit-text-stroke:0.45px #1f1f8f;">Connection</span><span style="color:#1e1e1e;">: </span><span style="color:#1e1e1e;">close</span></div>
<div class="m" style="left:1247.5px;top:783.9px"><span style="color:#1f1f8f;-webkit-text-stroke:0.45px #1f1f8f;">X-Powered-By</span><span style="color:#1e1e1e;">: </span><span style="color:#1e1e1e;"></span></div>
<div class="m" style="left:1247.5px;top:808.0px"><span style="color:#1e1e1e;">PHP/5.6.40-38+ubuntu20.04.1+deb.sury.org</span></div>
<div class="m" style="left:1247.5px;top:832.1px"><span style="color:#1e1e1e;">+1</span></div>
<div class="m" style="left:1247.5px;top:856.2px"><span style="color:#1f1f8f;-webkit-text-stroke:0.45px #1f1f8f;">Content-Length</span><span style="color:#1e1e1e;">: </span><span style="color:#1e1e1e;">4773</span></div>
<div class="m" style="left:1247.5px;top:904.4px"><span style="color:#167016;">&lt;!DOCTYPE HTML PUBLIC &quot;-//W3C//DTD HTML </span></div>
<div class="m" style="left:1247.5px;top:928.5px"><span style="color:#167016;">4.01 Transitional//EN&quot;</span></div>
<div class="m" style="left:1247.5px;top:952.6px"><span style="color:#167016;">&quot;http://www.w3.org/TR/html4/loose.dtd&quot;&gt;</span></div>
<div class="m" style="left:1247.5px;top:976.7px"><span style="color:#444444;">&lt;</span><span style="color:#b000b0;">html</span><span style="color:#444444;">&gt;</span><span style="color:#167016;">&lt;!-- InstanceBegin </span></div>
<div class="m" style="left:1247.5px;top:1000.8px"><span style="color:#167016;">template=&quot;/Templates/main_dynamic_templa</span></div>
<div class="m" style="left:1247.5px;top:1024.9px"><span style="color:#167016;">te.dwt.php&quot; </span></div>
<div class="m" style="left:1247.5px;top:1049.0px"><span style="color:#167016;">codeOutsideHTMLIsLocked=&quot;false&quot; --&gt;</span></div>
<div class="m" style="left:1247.5px;top:1073.1px"><span style="color:#444444;">&lt;</span><span style="color:#b000b0;">head</span><span style="color:#444444;">&gt;</span></div>
<div class="m" style="left:1247.5px;top:1097.2px"><span style="color:#444444;">&lt;</span><span style="color:#b000b0;">meta</span><span style="color:#1e1e1e;"> </span><span style="color:#1c1cd0;">http-equiv</span><span style="color:#444444;">=</span><span style="color:#444444;">&quot;</span><span style="color:#b01c1c;">Content-Type</span><span style="color:#444444;">&quot;</span><span style="color:#1e1e1e;"> </span><span style="color:#1c1cd0;">content</span><span style="color:#444444;">=</span></div>
<div class="m" style="left:1247.5px;top:1121.3px"><span style="color:#444444;">&quot;</span><span style="color:#b01c1c;">text/html; charset=iso-8859-1</span><span style="color:#444444;">&quot;</span><span style="color:#444444;">&gt;</span></div>
<div class="m" style="left:1247.5px;top:1169.5px"><span style="color:#167016;">&lt;!-- InstanceBeginEditable </span></div>
<div class="m" style="left:1247.5px;top:1193.6px"><span style="color:#167016;">name=&quot;document_title_rgn&quot; --&gt;</span></div>
<div class="m" style="left:1247.5px;top:1217.7px"><span style="color:#444444;">&lt;</span><span style="color:#b000b0;">title</span><span style="color:#444444;">&gt;</span><span style="color:#1e1e1e;">search</span><span style="color:#444444;">&lt;/</span><span style="color:#b000b0;">title</span><span style="color:#444444;">&gt;</span></div>
<div class="m" style="left:1247.5px;top:1241.8px"><span style="color:#167016;">&lt;!-- InstanceEndEditable --&gt;</span></div>
<div class="m" style="left:1247.5px;top:1265.9px"><span style="color:#444444;">&lt;</span><span style="color:#b000b0;">link</span><span style="color:#1e1e1e;"> </span><span style="color:#1c1cd0;">rel</span><span style="color:#444444;">=</span><span style="color:#444444;">&quot;</span><span style="color:#b01c1c;">stylesheet</span><span style="color:#444444;">&quot;</span><span style="color:#1e1e1e;"> </span><span style="color:#1c1cd0;">href</span><span style="color:#444444;">=</span><span style="color:#444444;">&quot;</span><span style="color:#b01c1c;">style.css</span><span style="color:#444444;">&quot;</span><span style="color:#1e1e1e;"> </span></div>
<div class="m" style="left:1247.5px;top:1290.0px"><span style="color:#1c1cd0;">type</span><span style="color:#444444;">=</span><span style="color:#444444;">&quot;</span><span style="color:#b01c1c;">text/css</span><span style="color:#444444;">&quot;</span><span style="color:#444444;">&gt;</span></div>
<div class="m" style="left:1247.5px;top:1314.1px"><span style="color:#167016;">&lt;!-- InstanceBeginEditable name=&quot;headers_rgn&quot; --&gt;</span></div>
<div class="m" style="left:1175px;width:60px;text-align:right;top:663.4px;color:#8c8c8c;letter-spacing:0.6px">1</div>
<div class="m" style="left:1175px;width:60px;text-align:right;top:687.5px;color:#8c8c8c;letter-spacing:0.6px">2</div>
<div class="m" style="left:1175px;width:60px;text-align:right;top:711.6px;color:#8c8c8c;letter-spacing:0.6px">3</div>
<div class="m" style="left:1175px;width:60px;text-align:right;top:735.7px;color:#8c8c8c;letter-spacing:0.6px">4</div>
<div class="m" style="left:1175px;width:60px;text-align:right;top:759.8px;color:#8c8c8c;letter-spacing:0.6px">5</div>
<div class="m" style="left:1175px;width:60px;text-align:right;top:783.9px;color:#8c8c8c;letter-spacing:0.6px">6</div>
<div class="m" style="left:1175px;width:60px;text-align:right;top:856.2px;color:#8c8c8c;letter-spacing:0.6px">7</div>
<div class="m" style="left:1175px;width:60px;text-align:right;top:880.3px;color:#8c8c8c;letter-spacing:0.6px">8</div>
<div class="m" style="left:1175px;width:60px;text-align:right;top:904.4px;color:#8c8c8c;letter-spacing:0.6px">9</div>
<div class="m" style="left:1175px;width:60px;text-align:right;top:952.6px;color:#8c8c8c;letter-spacing:0.6px">10</div>
<div class="m" style="left:1175px;width:60px;text-align:right;top:976.7px;color:#8c8c8c;letter-spacing:0.6px">11</div>
<div class="m" style="left:1175px;width:60px;text-align:right;top:1073.1px;color:#8c8c8c;letter-spacing:0.6px">12</div>
<div class="m" style="left:1175px;width:60px;text-align:right;top:1097.2px;color:#8c8c8c;letter-spacing:0.6px">13</div>
<div class="m" style="left:1175px;width:60px;text-align:right;top:1145.4px;color:#8c8c8c;letter-spacing:0.6px">14</div>
<div class="m" style="left:1175px;width:60px;text-align:right;top:1169.5px;color:#8c8c8c;letter-spacing:0.6px">15</div>
<div class="m" style="left:1175px;width:60px;text-align:right;top:1217.7px;color:#8c8c8c;letter-spacing:0.6px">16</div>
<div class="m" style="left:1175px;width:60px;text-align:right;top:1241.8px;color:#8c8c8c;letter-spacing:0.6px">17</div>
<div class="m" style="left:1175px;width:60px;text-align:right;top:1265.9px;color:#8c8c8c;letter-spacing:0.6px">18</div>
<div class="m" style="left:1175px;width:60px;text-align:right;top:1314.1px;color:#8c8c8c;letter-spacing:0.6px">19</div>
</div>
<svg style="left:586px;top:817px" width="8" height="24" viewBox="0 0 8 24"><circle cx="3.6" cy="3.8" r="2.4" fill="#a9a9a9"/><circle cx="3.6" cy="11.9" r="2.4" fill="#a9a9a9"/><circle cx="3.6" cy="20" r="2.4" fill="#a9a9a9"/></svg>
<svg style="left:1185px;top:1035px" width="8" height="24" viewBox="0 0 8 24"><circle cx="4" cy="4.3" r="2.5" fill="#a9a9a9"/><circle cx="4" cy="12.6" r="2.5" fill="#a9a9a9"/><circle cx="4" cy="20.8" r="2.5" fill="#a9a9a9"/></svg>
<div style="left:642px;top:748px;width:374px;height:700px;background:#fff;border:1px solid #a6a6a6;box-sizing:border-box;box-shadow:2px 2px 4px rgba(0,0,0,0.18)"></div>
<div style="left:643px;top:1142px;width:372px;height:41px;background:#fec598;"></div>
<div style="left:643px;top:1142px;width:366px;height:1px;background:#c8c8c8;"></div>
<div style="left:643px;top:1182px;width:366px;height:1px;background:#c8c8c8;"></div>
<div style="left:643px;top:870px;width:371px;height:1px;background:#cfcfcf;"></div>
<div style="left:643px;top:1222px;width:371px;height:1px;background:#cfcfcf;"></div>
<div class="t" style="left:689px;top:762.7px;font-size:21px;color:#1a1a1a;font-weight:normal;font-family:'Liberation Sans', sans-serif;">Scan</div>
<div class="t" style="left:689px;top:800.4px;font-size:21px;color:#1a1a1a;font-weight:normal;font-family:'Liberation Sans', sans-serif;">Do passive scan</div>
<div class="t" style="left:689px;top:839.5px;font-size:21px;color:#1a1a1a;font-weight:normal;font-family:'Liberation Sans', sans-serif;">Do active scan</div>
<div class="t" style="left:689px;top:879.3px;font-size:21px;color:#1a1a1a;font-weight:normal;font-family:'Liberation Sans', sans-serif;">Send to Intruder</div>
<div class="t" style="left:890px;width:101.5px;text-align:right;top:879.3px;font-size:21px;color:#6e6e6e">Ctrl-I</div>
<div class="t" style="left:689px;top:918.2px;font-size:21px;color:#1a1a1a;font-weight:normal;font-family:'Liberation Sans', sans-serif;">Send to Repeater</div>
<div class="t" style="left:890px;width:101.5px;text-align:right;top:918.2px;font-size:21px;color:#6e6e6e">Ctrl-R</div>
<div class="t" style="left:689px;top:956.5px;font-size:21px;color:#1a1a1a;font-weight:normal;font-family:'Liberation Sans', sans-serif;">Send to Sequencer</div>
<div class="t" style="left:689px;top:994.9px;font-size:21px;color:#1a1a1a;font-weight:normal;font-family:'Liberation Sans', sans-serif;">Send to Comparer</div>
<div class="t" style="left:689px;top:1033.5px;font-size:21px;color:#1a1a1a;font-weight:normal;font-family:'Liberation Sans', sans-serif;">Send to Decoder</div>
<div class="t" style="left:689px;top:1072.8px;font-size:21px;color:#1a1a1a;font-weight:normal;font-family:'Liberation Sans', sans-serif;">Show response in browser</div>
<div class="t" style="left:689px;top:1111.3px;font-size:21px;color:#1a1a1a;font-weight:normal;font-family:'Liberation Sans', sans-serif;">Request in browser</div>
<svg style="left:994px;top:1114.3px" width="12" height="18" viewBox="0 0 12 18"><path d="M2.2 2.2 L9.5 9 L2.2 15.8" fill="none" stroke="#777777" stroke-width="1.5"/></svg>
<div class="t" style="left:689px;top:1151.7px;font-size:21px;color:#1a1a1a;font-weight:normal;font-family:'Liberation Sans', sans-serif;">Extensions</div>
<svg style="left:994px;top:1154.7px" width="12" height="18" viewBox="0 0 12 18"><path d="M2.2 2.2 L9.5 9 L2.2 15.8" fill="none" stroke="#1e1e1e" stroke-width="1.8"/></svg>
<div class="t" style="left:689px;top:1192px;font-size:21px;color:#1a1a1a;font-weight:normal;font-family:'Liberation Sans', sans-serif;">Engagement tools</div>
<svg style="left:994px;top:1195px" width="12" height="18" viewBox="0 0 12 18"><path d="M2.2 2.2 L9.5 9 L2.2 15.8" fill="none" stroke="#777777" stroke-width="1.5"/></svg>
<div class="t" style="left:689px;top:1232.4px;font-size:21px;color:#1a1a1a;font-weight:normal;font-family:'Liberation Sans', sans-serif;">Copy URL</div>
<div class="t" style="left:689px;top:1270.2px;font-size:21px;color:#1a1a1a;font-weight:normal;font-family:'Liberation Sans', sans-serif;">Copy as curl command</div>
<div class="t" style="left:689px;top:1308px;font-size:21px;color:#1a1a1a;font-weight:normal;font-family:'Liberation Sans', sans-serif;">Copy to file</div>
<div style="left:1008px;top:1137px;width:230px;height:51px;background:#fff;border:1px solid #a6a6a6;box-sizing:border-box;box-shadow:2px 2px 4px rgba(0,0,0,0.18)"></div>
<div style="left:1009px;top:1143px;width:225px;height:39px;background:#fec598;"></div>
<div class="t" style="left:1055px;top:1151.1px;font-size:21px;color:#1a1a1a;font-weight:normal;font-family:'Liberation Sans', sans-serif;">Burp Bounty Pro</div>
<svg style="left:1217.5px;top:1154.1px" width="12" height="18" viewBox="0 0 12 18"><path d="M2.2 2.2 L9.5 9 L2.2 15.8" fill="none" stroke="#1e1e1e" stroke-width="1.8"/></svg>
<div style="left:1232px;top:1137px;width:197px;height:166px;background:#fff;border:1px solid #a6a6a6;box-sizing:border-box;box-shadow:2px 2px 4px rgba(0,0,0,0.2)"></div>
<div style="left:1233px;top:1143px;width:195px;height:39px;background:#fec598;"></div>
<div class="t" style="left:1278px;top:1151px;font-size:21px;color:#1a1a1a;font-weight:normal;font-family:'Liberation Sans', sans-serif;">Active Scan</div>
<div class="t" style="left:1278px;top:1189.8px;font-size:21px;color:#1a1a1a;font-weight:normal;font-family:'Liberation Sans', sans-serif;">Passive Scan</div>
<div class="t" style="left:1278px;top:1228.5px;font-size:21px;color:#1a1a1a;font-weight:normal;font-family:'Liberation Sans', sans-serif;">Smart Scan</div>
<div class="t" style="left:1278px;top:1267.1px;font-size:21px;color:#1a1a1a;font-weight:normal;font-family:'Liberation Sans', sans-serif;">Scan Tags</div>
<svg style="left:1408px;top:1270.1px" width="12" height="18" viewBox="0 0 12 18"><path d="M2.2 2.2 L9.5 9 L2.2 15.8" fill="none" stroke="#777777" stroke-width="1.5"/></svg>
<div style="left:1526px;top:0px;width:10px;height:1421px;background:#ffffff;"></div>
<div style="left:0px;top:1342px;width:1536px;height:79px;background:#ffffff;"></div>
</body></html>
